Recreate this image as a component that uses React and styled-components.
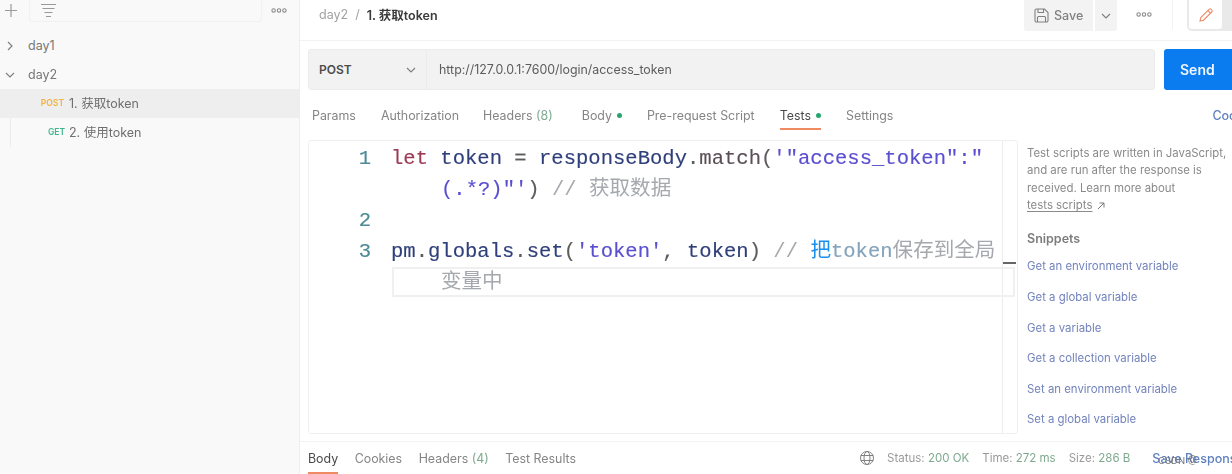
import React from 'react';
import styled, { createGlobalStyle } from 'styled-components';

const GlobalStyle = createGlobalStyle`
  html, body {
    margin: 0;
    padding: 0;
    background: #fff;
  }
  * {
    box-sizing: border-box;
  }
`;

const uiFont = `Inter, "Noto Sans CJK SC", sans-serif`;
const codeFont = `"Liberation Mono", "Noto Sans CJK SC", monospace`;

const Page = styled.div`
  width: 1232px;
  height: 474px;
  display: flex;
  overflow: hidden;
  position: relative;
  font-family: ${uiFont};
  color: #6b6b6b;
  filter: blur(0.35px);
`;

/* sidebar */
const Sidebar = styled.aside`
  width: 300px;
  flex: none;
  background: #f9f9f9;
  border-right: 1px solid #ededed;
`;

const SideTop = styled.div`
  height: 22px;
  display: flex;
  align-items: flex-start;
  padding-left: 4px;
`;

const IconButton = styled.span`
  display: flex;
  align-items: center;
  justify-content: center;
  flex: none;
`;

const SearchBox = styled.div`
  width: 233px;
  height: 22px;
  margin-left: 11px;
  padding: 2px 0 0 11px;
  display: flex;
  align-items: flex-start;
  border: 1px solid #f1f1f1;
  border-top: none;
  border-radius: 0 0 3px 3px;
`;

const SideMore = styled.span`
  margin-left: 9px;
  margin-top: 8px;
  display: flex;
`;

const Tree = styled.div`
  margin-top: 9px;
`;

const Folder = styled.div`
  height: 29px;
  display: flex;
  align-items: center;
  padding-left: 5px;
  gap: 13px;
  font-size: 12.5px;
  color: #777;
`;

const Request = styled.div`
  height: 29px;
  padding-bottom: 2px;
  display: flex;
  align-items: center;
  background: ${p => (p.$active ? '#eeeeee' : 'transparent')};
  font-size: 12.5px;
  color: #6f6f6f;
`;

const Method = styled.span`
  width: ${p => p.$width}px;
  flex: none;
  text-align: right;
  font-size: 8.500px;
  font-weight: 600;
  color: ${p => p.$color};
`;

const RequestName = styled.span`
  margin-left: ${p => p.$left}px;
`;

const TreeLine = styled.div`
  margin-left: 10px;
  border-left: 1px solid #ececec;
`;

/* main column */
const Main = styled.main`
  flex: 1;
  min-width: 0;
  display: flex;
  flex-direction: column;
`;

const Header = styled.header`
  height: 41px;
  flex: none;
  display: flex;
  border-bottom: 1px solid #f2f2f2;
  padding-left: 19px;
`;

const Crumbs = styled.div`
  flex: 1;
  height: 28px;
  display: flex;
  align-items: center;
  gap: 7px;
  font-size: 12.5px;
`;

const CrumbParent = styled.span`
  color: #a2a2a2;
`;

const CrumbCurrent = styled.span`
  color: #3a3a3a;
  font-weight: 600;
`;

const SaveGroup = styled.div`
  height: 31px;
  flex: none;
  display: flex;
  gap: 2px;
`;

const SaveButton = styled.div`
  width: 69px;
  display: flex;
  align-items: center;
  gap: 5px;
  padding-left: 10px;
  background: #f3f3f3;
  font-size: 12.5px;
  font-weight: 500;
  color: #808080;
  border-radius: 0 0 0 3px;
`;

const SaveCaret = styled.div`
  width: 22px;
  display: flex;
  align-items: center;
  justify-content: center;
  background: #f3f3f3;
  border-radius: 0 0 3px 0;
`;

const HeaderMore = styled.div`
  width: 56px;
  height: 29px;
  flex: none;
  display: flex;
  align-items: center;
  justify-content: center;
  padding-right: 1px;
  border-right: 1px solid #f2f2f2;
`;

const ModeSwitch = styled.div`
  width: 45px;
  height: 31px;
  flex: none;
  margin-left: 14px;
  padding: 0 0 2px 2px;
  background: #e9e9e9;
  border-radius: 0 0 0 5px;
`;

const ModeActive = styled.div`
  width: 33px;
  height: 29px;
  display: flex;
  align-items: center;
  justify-content: center;
  background: #fff;
  border-radius: 0 0 3px 3px;
`;

const UrlRow = styled.div`
  height: 41px;
  margin-top: 8px;
  flex: none;
  display: flex;
  padding-left: 8px;
`;

const UrlBox = styled.div`
  width: 847px;
  flex: none;
  display: flex;
  background: #f2f2f2;
  border: 1px solid #ebebeb;
  border-radius: 3px;
`;

const MethodSelect = styled.div`
  width: 118px;
  flex: none;
  display: flex;
  align-items: center;
  justify-content: space-between;
  padding: 0 10px;
  border-right: 1px solid #ebebeb;
  font-size: 12px;
  font-weight: 600;
  color: #4c4c4c;
`;

const UrlText = styled.div`
  display: flex;
  align-items: center;
  padding-left: 12px;
  font-size: 12.400px;
  color: #5c5c5c;
`;

const SendButton = styled.div`
  width: 80px;
  margin-left: 9px;
  flex: none;
  display: flex;
  align-items: center;
  padding-left: 16px;
  background: #0a7cf0;
  border-radius: 3px 0 0 3px;
  color: #eef6ff;
  font-size: 14px;
  font-weight: 600;
`;

const Tabs = styled.nav`
  display: flex;
  align-items: center;
  flex: none;
  height: ${p => p.$height}px;
`;

const Tab = styled.span`
  position: relative;
  display: flex;
  flex: none;
  align-items: center;
  gap: 5px;
  height: 100%;
  margin-left: ${p => p.$left}px;
  font-size: 12.400px;
  white-space: nowrap;
  color: ${p => (p.$active ? '#4a4a4a' : '#858585')};
  ${p =>
    p.$active &&
    `&::after {
      content: '';
      position: absolute;
      left: 0;
      right: 0;
      bottom: ${p.$lineBottom}px;
      height: 2px;
      background: #f08a62;
    }`}
`;

const Count = styled.span`
  color: #7fa98f;
`;

const Dot = styled.i`
  width: 5px;
  height: 5px;
  border-radius: 50%;
  background: #26a66f;
`;

const CodeLink = styled.span`
  flex: none;
  margin-left: 319px;
  font-size: 12.500px;
  font-weight: 500;
  white-space: nowrap;
  color: #5f7fc0;
`;

const Workspace = styled.div`
  height: 294px;
  flex: none;
  display: flex;
  padding-left: 8px;
`;

const Editor = styled.div`
  width: 710px;
  flex: none;
  display: flex;
  border: 1px solid #efefef;
  border-radius: 3px;
`;

const Code = styled.div`
  width: 693px;
  flex: none;
  padding-top: 2px;
  font-family: ${codeFont};
  font-size: 20.550px;
  line-height: 31px;
  white-space: pre;
  -webkit-text-stroke: 0.15px currentColor;
`;

const Line = styled.div`
  display: flex;
  height: 31px;
`;

const LineNo = styled.span`
  width: 62px;
  flex: none;
  text-align: right;
  color: #4d8a96;
`;

const LineText = styled.span`
  margin-left: 20px;
`;

const WrapText = styled.div`
  height: 31px;
  margin-left: 83px;
  padding-left: 49px;
`;

const ActiveWrap = styled.div`
  position: relative;
  z-index: 1;
  width: 623px;
  height: 30px;
  margin-left: 83px;
  padding-left: 47px;
  line-height: 27px;
  border: 2px solid #f0f0f0;
`;

const Kw = styled.span`
  color: #9c3a55;
`;
const Ident = styled.span`
  color: #2f3f7a;
`;
const Fn = styled.span`
  color: #5c5058;
`;
const Str = styled.span`
  color: #5a4fd0;
`;
const Punct = styled.span`
  color: #5c5c5c;
`;
const Comment = styled.span`
  color: #a5a9ad;
  -webkit-text-stroke: 0;
`;
const Selected = styled.span`
  color: #1a90f0;
  -webkit-text-stroke: 0;
`;
const Faded = styled.span`
  color: #85a3bb;
`;

const Scrollbar = styled.div`
  flex: 1;
  position: relative;
  border-left: 1px solid #ececec;
`;

const ScrollMark = styled.i`
  position: absolute;
  left: 0;
  right: 1px;
  top: 121px;
  height: 2px;
  background: #666;
`;

const Snippets = styled.aside`
  flex: none;
  width: 205px;
  padding: 5px 0 0 9px;
  font-size: 11.400px;
  line-height: 17.300px;
  color: #8a8a8a;
  white-space: nowrap;
`;

const DocLink = styled.span`
  display: inline-flex;
  align-items: center;
  gap: 5px;
`;

const Underlined = styled.span`
  text-decoration: underline;
  text-underline-offset: 2px;
`;

const SnippetTitle = styled.div`
  margin-top: 16px;
  margin-bottom: 11px;
  font-size: 12.500px;
  font-weight: 600;
  color: #7d7d7d;
`;

const SnippetList = styled.div`
  display: flex;
  flex-direction: column;
  gap: 13.300px;
`;

const Snippet = styled.span`
  color: #7283bd;
`;

const ResponseBar = styled.div`
  margin-top: 7px;
  height: 33px;
  flex: none;
  display: flex;
  border-top: 1px solid #f2f2f2;
  padding-left: 8px;
  position: relative;
`;

const StatusArea = styled.div`
  flex: none;
  margin-left: 283px;
  height: 32px;
  display: flex;
  align-items: center;
  font-size: 11.500px;
  color: #9a9a9a;
  white-space: nowrap;
`;

const Stat = styled.span`
  margin-left: ${p => p.$left}px;
`;

const StatValue = styled.span`
  color: #7fa98f;
`;

const SaveResponse = styled.span`
  margin-left: 22px;
  color: #5f7fc0;
  font-size: 12.500px;
  font-weight: 500;
`;

const Watermark = styled.span`
  position: absolute;
  left: 858px;
  bottom: 8px;
  font-size: 9.500px;
  color: #777;
  white-space: nowrap;
`;

const Dots = ({ color = '#8a8a8a' }) => (
  <svg width="16" height="5" viewBox="0 0 16 5" fill="none" stroke={color} strokeWidth="1.1">
    <circle cx="2.6" cy="2.5" r="1.7" />
    <circle cx="8" cy="2.5" r="1.7" />
    <circle cx="13.4" cy="2.5" r="1.7" />
  </svg>
);

const Chevron = ({ dir = 'down', color = '#808080', size = 10 }) => (
  <svg width={size} height={size} viewBox="0 0 10 10" fill="none" stroke={color} strokeWidth="1.2">
    <path d={dir === 'down' ? 'M1 3l4 4 4-4' : 'M3 1l4 4-4 4'} />
  </svg>
);

export default function App() {
  const snippets = [
    'Get an environment variable',
    'Get a global variable',
    'Get a variable',
    'Get a collection variable',
    'Set an environment variable',
    'Set a global variable',
  ];

  return (
    <Page>
      <GlobalStyle />
      <Sidebar>
        <SideTop>
          <IconButton>
            <svg width="14" height="20" viewBox="0 0 14 20" fill="none" stroke="#9a9a9a" strokeWidth="1.2">
              <path d="M7 4v13M1 10.5h12" />
            </svg>
          </IconButton>
          <SearchBox>
            <IconButton>
              <svg width="15" height="16" viewBox="0 0 15 16" fill="none" stroke="#9a9a9a" strokeWidth="1.1">
                <path d="M0 2.500h15M1.500 6.500h12M3.500 10.500h8M5 14.500h5" />
              </svg>
            </IconButton>
          </SearchBox>
          <SideMore>
            <Dots />
          </SideMore>
        </SideTop>
        <Tree>
          <Folder>
            <Chevron dir="right" />
            day1
          </Folder>
          <Folder>
            <Chevron />
            day2
          </Folder>
          <Request $active>
            <Method $width={64} $color="#f5b13d">POST</Method>
            <RequestName $left={5}>1. 获取token</RequestName>
          </Request>
          <TreeLine>
            <Request>
              <Method $width={54} $color="#3fb58f">GET</Method>
              <RequestName $left={4}>2. 使用token</RequestName>
            </Request>
          </TreeLine>
        </Tree>
      </Sidebar>

      <Main>
        <Header>
          <Crumbs>
            <CrumbParent>day2</CrumbParent>
            <CrumbParent>/</CrumbParent>
            <CrumbCurrent>1. 获取token</CrumbCurrent>
          </Crumbs>
          <SaveGroup>
            <SaveButton>
              <svg width="15" height="15" viewBox="0 0 15 15" fill="none" stroke="#808080" strokeWidth="1.1">
                <path d="M1 2.500a1.500 1.500 0 0 1 1.500-1.500h8l3.500 3.500v8a1.500 1.500 0 0 1-1.500 1.500h-10a1.500 1.500 0 0 1-1.500-1.500z" />
                <path d="M4 1v3.500h5.500V1M3.500 14V9.500a1 1 0 0 1 1-1h6a1 1 0 0 1 1 1V14" />
              </svg>
              Save
            </SaveButton>
            <SaveCaret>
              <Chevron />
            </SaveCaret>
          </SaveGroup>
          <HeaderMore>
            <Dots />
          </HeaderMore>
          <ModeSwitch>
            <ModeActive>
              <svg width="16" height="16" viewBox="0 0 16 16" fill="none" stroke="#ee8a68" strokeWidth="1.1">
                <path d="M2 14l.8-3.500L11 2.300a1.500 1.500 0 0 1 2.200 0l.5.500a1.500 1.500 0 0 1 0 2.200L5.500 13.200z" />
                <path d="M9.800 3.500l2.700 2.700" />
              </svg>
            </ModeActive>
          </ModeSwitch>
        </Header>

        <UrlRow>
          <UrlBox>
            <MethodSelect>
              POST
              <Chevron />
            </MethodSelect>
            <UrlText>http://127.0.0.1:7600/login/access_token</UrlText>
          </UrlBox>
          <SendButton>Send</SendButton>
        </UrlRow>

        <Tabs $height={50}>
          <Tab $left={12}>Params</Tab>
          <Tab $left={25}>Authorization</Tab>
          <Tab $left={24}>
            <span>Headers <Count>(8)</Count></span>
          </Tab>
          <Tab $left={29}>Body <Dot /></Tab>
          <Tab $left={25}>Pre-request Script</Tab>
          <Tab $left={25} $active $lineBottom={10}>Tests <Dot /></Tab>
          <Tab $left={25}>Settings</Tab>
          <CodeLink>Cookies</CodeLink>
        </Tabs>

        <Workspace>
          <Editor>
            <Code>
              <Line>
                <LineNo>1</LineNo>
                <LineText>
                  <Kw>let</Kw> <Ident>token</Ident> <Punct>=</Punct> <Ident>responseBody</Ident><Punct>.</Punct><Fn>match</Fn><Punct>(</Punct><Str>'"access_token":"</Str>
                </LineText>
              </Line>
              <WrapText>
                <Str>(.*?)"'</Str><Punct>)</Punct> <Comment>// 获取数据</Comment>
              </WrapText>
              <Line>
                <LineNo>2</LineNo>
              </Line>
              <Line>
                <LineNo>3</LineNo>
                <LineText>
                  <Ident>pm</Ident><Punct>.</Punct><Ident>globals</Ident><Punct>.</Punct><Ident>set</Ident><Punct>(</Punct><Str>'token'</Str><Punct>,</Punct> <Ident>token</Ident><Punct>)</Punct> <Comment>//</Comment> <Selected>把</Selected><Faded>token</Faded><Comment>保存到全局</Comment>
                </LineText>
              </Line>
              <ActiveWrap>
                <Comment>变量中</Comment>
              </ActiveWrap>
            </Code>
            <Scrollbar>
              <ScrollMark />
            </Scrollbar>
          </Editor>
          <Snippets>
            <div>Test scripts are written in JavaScript,</div>
            <div>and are run after the response is</div>
            <div>received. Learn more about</div>
            <DocLink>
              <Underlined>tests scripts</Underlined>
              <svg width="8" height="8" viewBox="0 0 8 8" fill="none" stroke="#7a7a7a" strokeWidth="1">
                <path d="M1 7l6-6M2.500 1H7v4.500" />
              </svg>
            </DocLink>
            <SnippetTitle>Snippets</SnippetTitle>
            <SnippetList>
              {snippets.map(x => (
                <Snippet key={x}>{x}</Snippet>
              ))}
            </SnippetList>
          </Snippets>
        </Workspace>

        <ResponseBar>
          <Tabs $height={32}>
            <Tab $left={0} $active $lineBottom={0}>Body</Tab>
            <Tab $left={16.5}>Cookies</Tab>
            <Tab $left={16.5}>
              <span>Headers <Count>(4)</Count></span>
            </Tab>
            <Tab $left={16.5}>Test Results</Tab>
          </Tabs>
          <StatusArea>
            <svg width="16" height="16" viewBox="0 0 16 16" fill="none" stroke="#808080" strokeWidth="1">
              <circle cx="8" cy="8" r="6.5" />
              <ellipse cx="8" cy="8" rx="3" ry="6.5" />
              <path d="M1.800 5.500h12.400M1.800 10.500h12.400" />
            </svg>
            <Stat $left={12}>Status: <StatValue>200 OK</StatValue></Stat>
            <Stat $left={13}>Time: <StatValue>272 ms</StatValue></Stat>
            <Stat $left={13}>Size: <StatValue>286 B</StatValue></Stat>
            <SaveResponse>Save Response</SaveResponse>
          </StatusArea>
          <Watermark>CSDN @</Watermark>
        </ResponseBar>
      </Main>
    </Page>
  );
}
